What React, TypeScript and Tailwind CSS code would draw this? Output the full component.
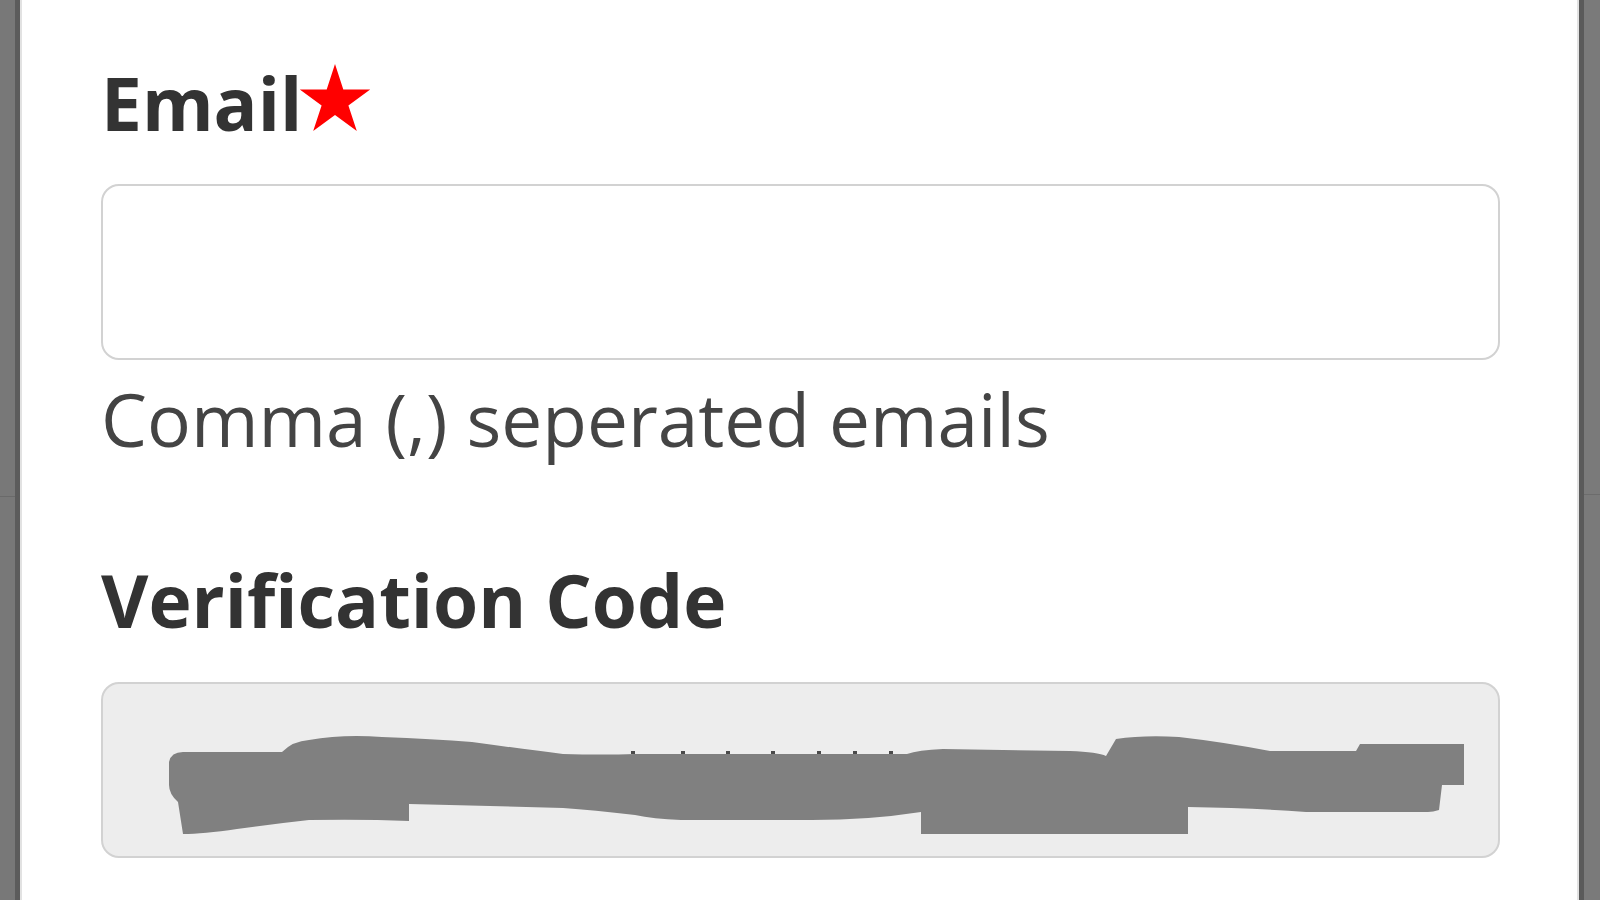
const Star = () => (
  <svg width="76" height="68" viewBox="0 0 76 68" className="inline-block">
    <polygon
      fill="#ff0000"
      points="38,1 46.3,26.6 73.2,26.6 51.4,42.4 59.8,67.9 38,52.1 16.2,67.9 24.6,42.4 2.8,26.6 29.7,26.6"
    />
  </svg>
);

// scribble that hides the code, a few letter tops still peek out above it
const Redacted = () => (
  <svg className="absolute inset-0" width="1397" height="176" viewBox="0 0 1397 176">
    {[528, 578, 623, 668, 714, 750, 786].map((x) => (
      <rect key={x} x={x} y={67} width={4} height={3} fill="#4a4a4a" />
    ))}
    <path
      fill="#808080"
      d="M66,78 Q68,68 80,68 L179,68 Q190,57 206,56 Q240,50 279,53 Q330,55 369,58 Q420,65 460,70 Q500,71 532,70 L804,70 Q815,66 840,65 L967,67 Q995,68 1003,72 L1013,55 Q1040,51 1076,53 Q1120,58 1167,67 L1253,67 L1257,60 L1361,60 L1361,101 L1339,101 L1336,126 Q1330,128 1325,128 L1203,128 Q1150,124 1085,123 L1085,150 L818,150 L818,128 Q760,137 696,136 L578,136 Q550,135 532,131 Q490,126 460,124 L306,120 L306,137 Q260,135 206,136 Q170,140 134,145 Q100,150 80,150 L75,118 Q66,110 66,101 Z"
    />
  </svg>
);

const App = () => {
  return (
    <div className="flex h-[900px] w-[1600px] overflow-hidden bg-white font-['Open_Sans',sans-serif]">
      <div className="flex w-[22px] shrink-0">
        <div className="flex w-[15px] flex-col bg-[#787878]">
          <div className="h-[496px]"></div>
          <div className="h-px bg-[#6a6a6a]"></div>
        </div>
        <div className="w-[5px] bg-[#5c5c5c]"></div>
        <div className="w-[2px] bg-[#e2e2e2]"></div>
      </div>

      <div className="flex flex-1 flex-col pl-[79px] pr-[77px] pt-[52px]">
        <label className="flex items-end text-[73px] leading-[73px] font-bold text-[#333333]">
          <span>Email</span>
          <span className="-ml-[5px] mb-[8px]">
            <Star />
          </span>
        </label>
        <div className="mt-[45px] h-[176px] rounded-[18px] border-2 border-[#d2d2d2] bg-white"></div>
        <p className="mt-[22px] text-[73px] leading-[73px] text-[#444444]">
          Comma (,) seperated emails
        </p>

        <label className="mt-[108px] text-[73px] leading-[73px] font-bold text-[#333333]">
          Verification Code
        </label>
        <div className="relative mt-[46px] h-[176px] rounded-[18px] border-2 border-[#d2d2d2] bg-[#ededed]">
          <Redacted />
        </div>
      </div>

      <div className="flex w-[23px] shrink-0">
        <div className="w-[2px] bg-[#e2e2e2]"></div>
        <div className="w-[5px] bg-[#5a5a5a]"></div>
        <div className="flex flex-1 flex-col bg-[#7a7a7a]">
          <div className="h-[494px]"></div>
          <div className="h-px bg-[#6c6c6c]"></div>
        </div>
      </div>
    </div>
  );
};

export default App;
